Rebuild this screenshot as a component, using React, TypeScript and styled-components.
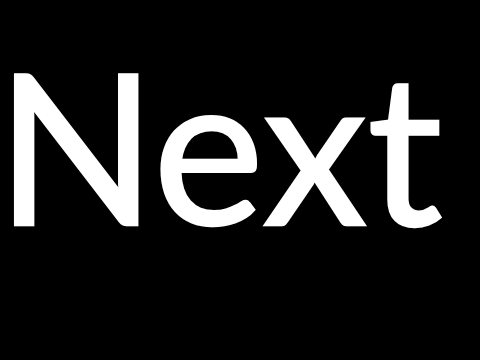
import React from "react";
import styled, { createGlobalStyle } from "styled-components";

const GlobalStyle = createGlobalStyle`
  html, body {
    margin: 0;
    padding: 0;
    background: #000;
  }
`;

const Screen = styled.div`
  width: 480px;
  height: 360px;
  background: #000;
  overflow: hidden;
  display: flex;
  align-items: flex-start;
  padding: 39px 0 0 0;
  box-sizing: border-box;
`;

const Label = styled.span`
  font-family: "Lato", "Open Sans", sans-serif;
  font-size: 210px;
  font-weight: 400;
  line-height: 1;
  color: #fff;
  -webkit-text-stroke: 2.5px #fff;
  margin-left: -4px;
  white-space: nowrap;
`;

const App = () => {
  return (
    <>
      <GlobalStyle />
      <Screen>
        <Label>Next</Label>
      </Screen>
    </>
  );
};

export default App;
